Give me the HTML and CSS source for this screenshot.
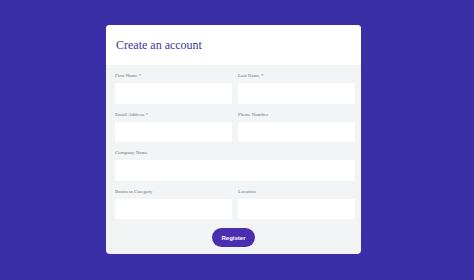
FILE: index.html
```html
<!DOCTYPE html>
<html>
<head>
<meta charset="utf-8">
<link rel="stylesheet" href="styles.css">
</head>
<body>
<div class="card">
  <div class="card-header">
    <h1 class="title">Create an account</h1>
  </div>
  <form class="card-body">
    <div class="grid">
      <div class="field">
        <label class="label">First Name *</label>
        <div class="input"></div>
      </div>
      <div class="field">
        <label class="label">Last Name *</label>
        <div class="input"></div>
      </div>
      <div class="field">
        <label class="label">Email Address *</label>
        <div class="input"></div>
      </div>
      <div class="field">
        <label class="label">Phone Number</label>
        <div class="input"></div>
      </div>
      <div class="field full">
        <label class="label">Company Name</label>
        <div class="input"></div>
      </div>
      <div class="field">
        <label class="label">Business Category</label>
        <div class="input"></div>
      </div>
      <div class="field">
        <label class="label">Location</label>
        <div class="input"></div>
      </div>
    </div>
    <div class="actions">
      <button type="button" class="btn">Register</button>
    </div>
  </form>
</div>
</body>
</html>
```
FILE: styles.css
```css
html, body {
  margin: 0;
  padding: 0;
}
body {
  background: #3a2fa7;
  width: 474px;
  height: 280px;
  overflow: hidden;
  font-family: "Liberation Serif", serif;
}
.card {
  margin: 25px 0 0 106px;
  width: 255px;
  height: 229px;
  background: #f3f4f6;
  border-radius: 4px;
  overflow: hidden;
  display: flex;
  flex-direction: column;
}
.card-header {
  background: #ffffff;
  height: 40px;
  padding: 0 10px;
  display: flex;
  align-items: center;
}
.title {
  margin: 0;
  font-family: "Liberation Serif", serif;
  font-weight: normal;
  font-size: 12px;
  color: #3d3699;
}
.card-body {
  margin: 0;
  padding: 6px 6px 0 9px;
  display: flex;
  flex-direction: column;
}
.grid {
  display: grid;
  grid-template-columns: 1fr 1fr;
  column-gap: 6px;
  row-gap: 6px;
}
.full {
  grid-column: 1 / span 2;
}
.field {
  display: flex;
  flex-direction: column;
}
.label {
  font-size: 5px;
  line-height: 10px;
  color: #6b7280;
  height: 10px;
  margin-bottom: 2px;
}
.input {
  height: 20.5px;
  background: #ffffff;
  border-radius: 2px;
}
.actions {
  display: flex;
  justify-content: center;
  padding-top: 9px;
}
.btn {
  width: 43px;
  height: 19px;
  border: none;
  border-radius: 10px;
  background: #4a2eb0;
  color: #ffffff;
  font-family: "Liberation Sans", Arial, sans-serif;
  font-weight: bold;
  font-size: 6px;
  padding: 0;
  margin-right: 3px;
}
```
